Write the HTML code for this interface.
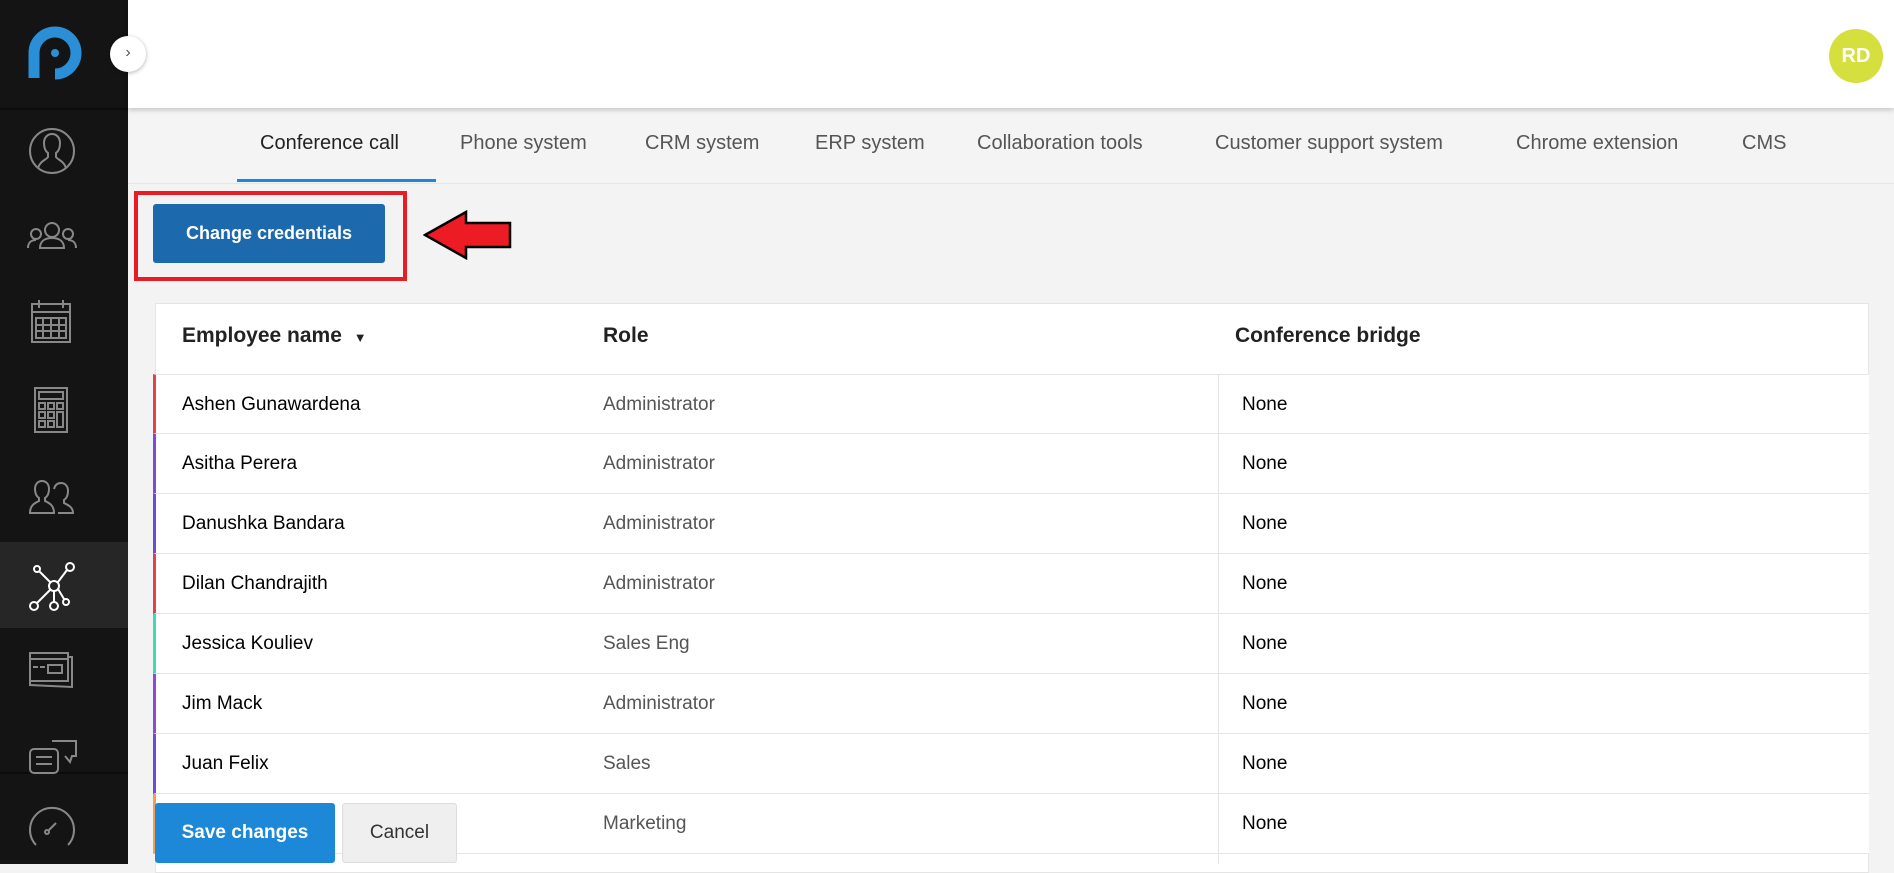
<!DOCTYPE html>
<html><head><meta charset="utf-8"><style>
*{margin:0;padding:0;box-sizing:border-box}
body{width:1894px;height:864px;overflow:hidden;background:#f3f3f3;font-family:"Liberation Sans",sans-serif;position:relative}
.sb{position:absolute;left:0;top:0;width:128px;height:864px;background:#141414}
.act{position:absolute;left:0;top:542px;width:128px;height:86px;background:#262626}
.sep{position:absolute;left:0;top:108px;width:128px;height:2px;background:#0c0c0c}
.sep2{position:absolute;left:0;top:772px;width:128px;height:2px;background:#0c0c0c}
.ic{position:absolute;left:22px;width:84px;height:60px}
.hdr{position:absolute;left:128px;top:0;right:0;height:108px;background:#fff;box-shadow:0 2px 5px rgba(0,0,0,.2);z-index:2}
.tog{position:absolute;left:110px;top:36px;width:36px;height:36px;border-radius:50%;background:#fff;box-shadow:0 1px 4px rgba(0,0,0,.3);z-index:3;color:#556;font-size:16px;text-align:center;line-height:34px}
.av{position:absolute;left:1829px;top:29px;width:54px;height:54px;border-radius:50%;background:#d5df3d;color:#fff;font-weight:bold;font-size:20px;text-align:center;line-height:54px;z-index:3}
.tabs{position:absolute;left:128px;top:108px;right:0;height:76px;border-bottom:1px solid #e6e6e6;background:#f4f4f4}
.tab{position:absolute;top:132px;font-size:20px;color:#555}
.ul{position:absolute;left:237px;top:179px;width:199px;height:3px;background:#1e88d8}
.rb{position:absolute;left:134px;top:191px;width:273px;height:90px;border:4px solid #e81c24}
.cb{position:absolute;left:153px;top:204px;width:232px;height:59px;background:#1c69ad;border-radius:3px;color:#fff;font-weight:bold;font-size:18px;text-align:center;line-height:58px}
.card{position:absolute;left:155px;top:303px;width:1714px;height:570px;background:#fff;border:1px solid #e4e4e4}
.th{position:absolute;top:324px;font-size:21px;color:#222;font-weight:bold}
.row{position:absolute;left:153px;width:1716px;height:60px;border-bottom:1px solid #e6e6e6;background:#fff}
.row span{position:absolute;top:19px;font-size:19px}
.vd{position:absolute;left:1218px;top:374px;width:1px;height:490px;background:#e4e4e4}
.sv{position:absolute;left:155px;top:803px;width:180px;height:60px;background:#1e88d8;border-radius:3px;color:#fff;font-weight:bold;font-size:19px;text-align:center;line-height:60px}
.cn{position:absolute;left:342px;top:803px;width:115px;height:60px;background:#efefef;border:1px solid #ddd;border-radius:3px;color:#333;font-size:19px;text-align:center;line-height:58px}
</style></head><body>
<div class="sb"></div><div class="act"></div><div class="sep"></div><div class="sep2"></div>
<svg style="position:absolute;left:28px;top:26px" width="54" height="54" viewBox="0 0 54 54"><path d="M6 52V27A21 21 0 1 1 27 48" fill="none" stroke="#2a8fd6" stroke-width="11"/><circle cx="27" cy="27" r="7" fill="#141414"/><circle cx="27" cy="27" r="4" fill="#2a8fd6"/></svg>
<svg class="ic" style="top:121px" viewBox="0 0 84 60" fill="none" stroke="#888" stroke-width="2"><circle cx="30" cy="30" r="22"/><path d="M16 47c2-7 8-8 10-11v-4c-3-2-4-6-4-10 0-6 4-9 8-9s8 3 8 9c0 4-1 8-4 10v4c2 3 8 4 10 11"/></svg>
<svg class="ic" style="top:206px" viewBox="0 0 84 60" fill="none" stroke="#888" stroke-width="2"><circle cx="30" cy="24" r="7"/><path d="M18 42c0-7 5-10 12-10s12 3 12 10z"/><circle cx="14" cy="28" r="5"/><path d="M6 42c0-5 3-8 8-8"/><circle cx="46" cy="28" r="5"/><path d="M54 42c0-5-3-8-8-8"/></svg>
<svg class="ic" style="top:294px" viewBox="0 0 84 60" fill="none" stroke="#888" stroke-width="2"><rect x="10" y="10" width="38" height="38"/><path d="M10 18h38M17 6v8M41 6v8M14 24h30v20H14zM14 31h30M14 37h30M21 24v20M29 24v20M37 24v20"/></svg>
<svg class="ic" style="top:381px" viewBox="0 0 84 60" fill="none" stroke="#888" stroke-width="2"><rect x="13" y="7" width="32" height="44"/><path d="M17 11h24v7H17zM17 22h6v6h-6zM26 22h6v6h-6zM35 22h6v6h-6zM17 31h6v6h-6zM26 31h6v6h-6zM17 40h6v6h-6zM26 40h6v6h-6zM35 31h6v15h-6z"/></svg>
<svg class="ic" style="top:465px" viewBox="0 0 84 60" fill="none" stroke="#888" stroke-width="2"><path d="M8 48c0-8 5-10 9-12v-3c-3-2-4-5-4-9 0-5 3-8 7-8s7 3 7 8c0 4-1 7-4 9v3c4 2 9 4 9 12zM32 24c1-4 3-6 7-6s7 3 7 8c0 4-1 7-4 9v3c4 2 9 4 9 10H36"/></svg>
<svg class="ic" style="top:556px" viewBox="0 0 84 60" fill="none" stroke="#fff" stroke-width="2"><circle cx="32" cy="30" r="5"/><circle cx="15" cy="13" r="3"/><circle cx="48" cy="11" r="4"/><circle cx="12" cy="50" r="4"/><circle cx="32" cy="50" r="4"/><circle cx="44" cy="46" r="3"/><path d="M28 26l-11-11M36 26l9-12M28 34l-13 13M32 35v11M36 33l6 10"/></svg>
<svg class="ic" style="top:643px" viewBox="0 0 84 60" fill="none" stroke="#888" stroke-width="2"><path d="M8 10h38v28H8zM8 16h38M11 24h5M18 24h5M26 22h14v8H26zM46 14h4v30l-42-2v-4"/></svg>
<svg class="ic" style="top:727px" viewBox="0 0 84 60" fill="none" stroke="#888" stroke-width="2"><rect x="8" y="22" width="28" height="24" rx="4"/><path d="M14 30h16M14 37h16M30 14h24v15h-4l-2 6-5-6"/></svg>
<svg class="ic" style="top:793px" viewBox="0 0 84 60" fill="none" stroke="#888" stroke-width="2"><path d="M14 52A22 22 0 1 1 46 52"/><path d="M26 38l8-8"/><circle cx="25" cy="39" r="2"/></svg>
<div class="hdr"></div>
<div class="tog">&#8250;</div>
<div class="av">RD</div>
<div class="tabs"></div>
<div class="tab" style="left:260px;color:#222">Conference call</div>
<div class="tab" style="left:460px">Phone system</div>
<div class="tab" style="left:645px">CRM system</div>
<div class="tab" style="left:815px">ERP system</div>
<div class="tab" style="left:977px">Collaboration tools</div>
<div class="tab" style="left:1215px">Customer support system</div>
<div class="tab" style="left:1516px">Chrome extension</div>
<div class="tab" style="left:1742px">CMS</div>
<div class="ul"></div>
<div class="rb"></div>
<div class="cb">Change credentials</div>
<svg style="position:absolute;left:423px;top:210px" width="90" height="50" viewBox="0 0 90 50"><path d="M2 25L43 2v11h44v24H43v11z" fill="#ed1c24" stroke="#000" stroke-width="2.5"/></svg>
<div class="card"></div>
<div class="th" style="left:182px">Employee name <span style="font-size:13px;margin-left:6px">&#9660;</span></div>
<div class="th" style="left:603px">Role</div>
<div class="th" style="left:1235px">Conference bridge</div>
<div class="row" style="top:374px;border-top:1px solid #e6e6e6;border-left:3px solid #e0434f"><span style="left:26px">Ashen Gunawardena</span><span style="left:447px;color:#555">Administrator</span><span style="left:1086px">None</span></div>
<div class="row" style="top:434px;border-left:3px solid #7a4cd8"><span style="left:26px">Asitha Perera</span><span style="left:447px;color:#555">Administrator</span><span style="left:1086px">None</span></div>
<div class="row" style="top:494px;border-left:3px solid #6a4cd8"><span style="left:26px">Danushka Bandara</span><span style="left:447px;color:#555">Administrator</span><span style="left:1086px">None</span></div>
<div class="row" style="top:554px;border-left:3px solid #e0434f"><span style="left:26px">Dilan Chandrajith</span><span style="left:447px;color:#555">Administrator</span><span style="left:1086px">None</span></div>
<div class="row" style="top:614px;border-left:3px solid #3ddbb0"><span style="left:26px">Jessica Kouliev</span><span style="left:447px;color:#555">Sales Eng</span><span style="left:1086px">None</span></div>
<div class="row" style="top:674px;border-left:3px solid #8a4cd8"><span style="left:26px">Jim Mack</span><span style="left:447px;color:#555">Administrator</span><span style="left:1086px">None</span></div>
<div class="row" style="top:734px;border-left:3px solid #6a4cd8"><span style="left:26px">Juan Felix</span><span style="left:447px;color:#555">Sales</span><span style="left:1086px">None</span></div>
<div class="row" style="top:794px;border-left:3px solid #f0a050"><span style="left:447px;color:#555">Marketing</span><span style="left:1086px">None</span></div>
<div class="vd"></div>
<div class="sv">Save changes</div>
<div class="cn">Cancel</div>
</body></html>
